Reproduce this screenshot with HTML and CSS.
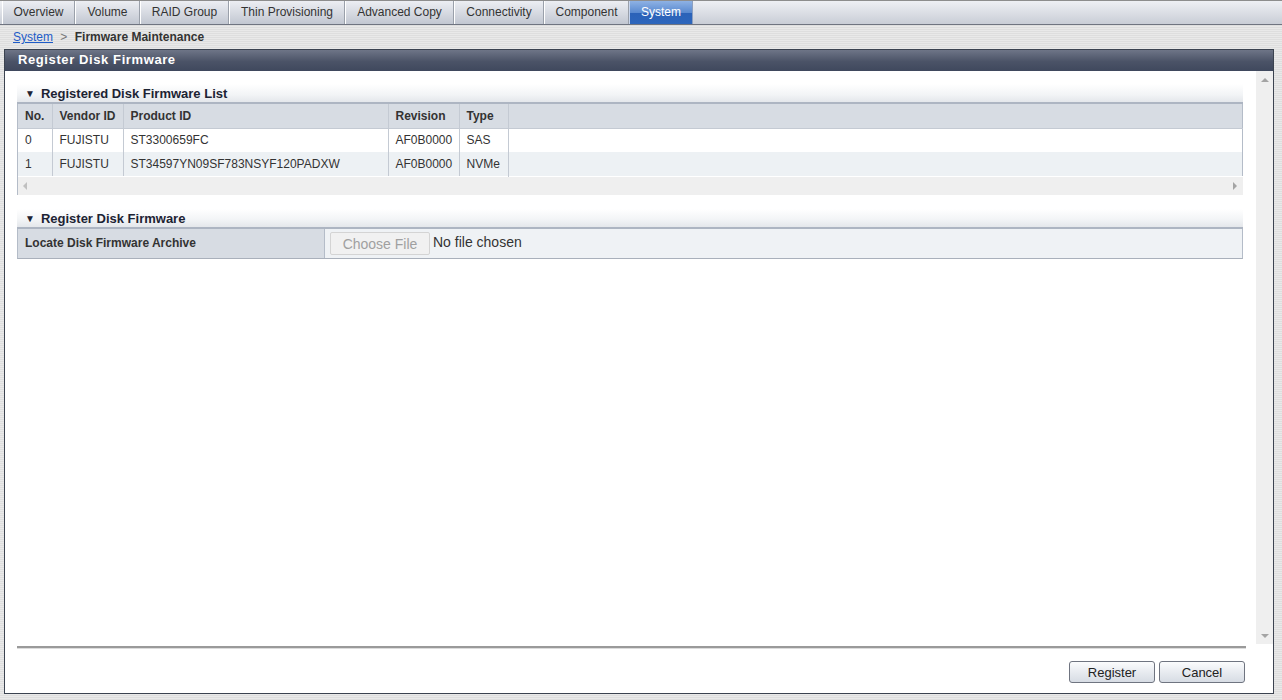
FILE: index.html
```html
<!DOCTYPE html>
<html>
<head>
	<meta charset="utf-8">
	<link rel="stylesheet" href="styles.css">
</head>
<body>
	<div class="tabs">
		<a class="tab" href="#">Overview</a>
		<a class="tab" href="#">Volume</a>
		<a class="tab" href="#">RAID Group</a>
		<a class="tab" href="#">Thin Provisioning</a>
		<a class="tab" href="#">Advanced Copy</a>
		<a class="tab" href="#">Connectivity</a>
		<a class="tab" href="#">Component</a>
		<a class="tab active" href="#">System</a>
	</div>

	<div class="crumbs">
		<a href="#">System</a>
		<span class="crumb-sep">&gt;</span>
		<span class="crumb-here">Firmware Maintenance</span>
	</div>

	<div class="panel">
		<div class="panel-title">Register Disk Firmware</div>

		<div class="panel-scroll">
			<div class="content">
				<div class="section-head"><span class="toggle">&#9660;</span>Registered Disk Firmware List</div>
				<div class="grid">
					<table class="list">
						<tr>
							<th class="c-no">No.</th>
							<th class="c-vendor">Vendor ID</th>
							<th class="c-product">Product ID</th>
							<th class="c-rev">Revision</th>
							<th class="c-type">Type</th>
							<th class="c-fill"></th>
						</tr>
						<tr>
							<td>0</td>
							<td>FUJISTU</td>
							<td>ST3300659FC</td>
							<td>AF0B0000</td>
							<td>SAS</td>
							<td class="c-fill"></td>
						</tr>
						<tr class="alt">
							<td>1</td>
							<td>FUJISTU</td>
							<td>ST34597YN09SF783NSYF120PADXW</td>
							<td>AF0B0000</td>
							<td>NVMe</td>
							<td class="c-fill"></td>
						</tr>
					</table>
					<div class="hscroll">
						<span class="arrow-left"></span>
						<span class="arrow-right"></span>
					</div>
				</div>

				<div class="section-head second"><span class="toggle">&#9660;</span>Register Disk Firmware</div>
				<div class="form-row">
					<div class="form-label">Locate Disk Firmware Archive</div>
					<div class="form-value">
						<button class="file-btn" disabled>Choose File</button>
						<span class="file-name">No file chosen</span>
					</div>
				</div>
			</div>
			<div class="vscroll">
				<span class="arrow-up"></span>
				<span class="arrow-down"></span>
			</div>
		</div>

		<div class="footer">
			<div class="rule"></div>
			<div class="buttons">
				<button class="btn">Register</button>
				<button class="btn">Cancel</button>
			</div>
		</div>
	</div>
</body>
</html>
```

FILE: styles.css
```css
	* {
		box-sizing: border-box;
	}
	html, body {
		height: 100%;
	}
	body {
		margin: 0;
		display: flex;
		flex-direction: column;
		font-family: "Liberation Sans", Arial, sans-serif;
		font-size: 12px;
		color: #222;
		background: repeating-linear-gradient(to bottom, #e9e9e9 0, #e9e9e9 1px, #dedede 1px, #dedede 2px);
	}

/* top tabs */
	.tabs {
		display: flex;
		height: 25px;
		border-top: 1px solid #8d8d8d;
		border-bottom: 1px solid #6f7480;
		background: linear-gradient(#eef0f4, #c9cdd6);
		padding-left: 2px;
	}
	.tab {
		display: block;
		flex: none;
		line-height: 22px;
		text-align: center;
		white-space: nowrap;
		color: #333;
		text-decoration: none;
		border-left: 1px solid #fff;
		border-right: 1px solid #9aa0aa;
		background: linear-gradient(#eceef3, #c2c7d1);
	}
	.tab:nth-child(1) {width: 73px}
	.tab:nth-child(2) {width: 65px}
	.tab:nth-child(3) {width: 89px}
	.tab:nth-child(4) {width: 116px}
	.tab:nth-child(5) {width: 109px}
	.tab:nth-child(6) {width: 90px}
	.tab:nth-child(7) {width: 85px}
	.tab:nth-child(8) {width: 64px}
	.tab.active {
		color: #fff;
		background: linear-gradient(#8eb2e4 0, #5a8ad0 50%, #2b62b8 52%, #2d66bc 100%);
		border-left-color: #c8d6ee;
		border-right-color: #8da0c0;
	}

/* breadcrumbs */
	.crumbs {
		height: 24px;
		line-height: 24px;
		padding-left: 13px;
		white-space: nowrap;
	}
	.crumbs a {
		color: #1e5cc8;
		text-decoration: underline;
	}
	.crumb-sep {
		color: #777;
		margin: 0 4px 0 4px;
	}
	.crumb-here {
		font-weight: bold;
		color: #333;
	}

/* main panel */
	.panel {
		flex: 1;
		display: flex;
		flex-direction: column;
		margin: 0 8px 6px 4px;
		border: 1px solid #3b4350;
		background: #fff;
	}
	.panel-title {
		height: 21px;
		line-height: 20px;
		padding-left: 13px;
		color: #fff;
		font-size: 13px;
		font-weight: bold;
		letter-spacing: 0.6px;
		background: linear-gradient(#6e7587, #4b5367 55%, #3f485d);
	}
	.panel-scroll {
		flex: 1;
		display: flex;
	}
	.content {
		flex: 1;
		padding: 13px 13px 0 12px;
	}
	.vscroll {
		width: 17px;
		background: #efefef;
		display: flex;
		flex-direction: column;
		justify-content: space-between;
		align-items: center;
		padding: 7px 0 6px;
	}
	.arrow-up, .arrow-down, .arrow-left, .arrow-right {
		width: 0;
		height: 0;
		border: 4px solid transparent;
	}
	.arrow-up {border-bottom-color: #a4a4a4; border-top: none}
	.arrow-down {border-top-color: #a4a4a4; border-bottom: none}
	.arrow-left {border-right-color: #c0c0c0; border-left: none}
	.arrow-right {border-left-color: #a4a4a4; border-right: none}

/* section heading */
	.section-head {
		height: 20px;
		line-height: 19px;
		padding-left: 8px;
		font-size: 13px;
		font-weight: bold;
		color: #1c2333;
		background: linear-gradient(#fff, #f2f4f6 60%, #e4e7eb);
		border-bottom: 2px solid #adb5c2;
	}
	.section-head.second {
		margin-top: 14px;
	}
	.toggle {
		font-size: 10px;
		margin-right: 6px;
		vertical-align: 1px;
	}

/* firmware list */
	.grid {
		border-left: 1px solid #b4bcc8;
	}
	.list {
		width: 100%;
		table-layout: fixed;
		border-collapse: collapse;
	}
	.list th, .list td {
		height: 24px;
		padding: 0 7px;
		text-align: left;
		white-space: nowrap;
		border-right: 1px solid #c4cad3;
	}
	.list th {
		background: #d7dce3;
		font-weight: bold;
		color: #333;
	}
	.list td {
		color: #333;
		background: #fff;
	}
	.list tr:first-child th {
		border-bottom: 1px solid #c4cad3;
	}
	.list tr.alt td {
		background: #edf1f4;
	}
	.list .c-fill {
		border-right: 1px solid #b4bcc8;
	}
	.list tr.alt td.c-fill {
		border-bottom: 1px solid #fff;
	}
	.c-no {width: 34px}
	.c-vendor {width: 71px}
	.c-product {width: 265px}
	.c-rev {width: 71px}
	.c-type {width: 49px}
	.hscroll {
		height: 18px;
		background: #efefef;
		display: flex;
		justify-content: space-between;
		align-items: center;
		padding: 0 6px 0 5px;
	}

/* register form */
	.form-row {
		display: flex;
		height: 30px;
		border-left: 1px solid #b4bcc8;
		border-right: 1px solid #b4bcc8;
		border-bottom: 1px solid #a9b0bb;
	}
	.form-label {
		width: 307px;
		padding-left: 7px;
		line-height: 29px;
		font-weight: bold;
		color: #333;
		background: #d7dce3;
		border-right: 1px solid #b4bcc8;
	}
	.form-value {
		flex: 1;
		display: flex;
		align-items: center;
		padding-left: 5px;
		background: #eff2f5;
	}
	.file-btn {
		width: 100px;
		height: 23px;
		margin-top: 1px;
		font-family: "Liberation Sans", Arial, sans-serif;
		font-size: 14px;
		color: #a0a0a0;
		background: #f1f1f1;
		border: 1px solid #d4d4d4;
		border-radius: 2px;
		padding: 0;
	}
	.file-name {
		font-size: 14px;
		color: #333;
		margin-left: 3px;
		margin-top: -2px;
	}

/* footer */
	.footer {
		padding: 2px 27px 10px 12px;
	}
	.rule {
		height: 3px;
		border-top: 2px solid #9a9a9a;
		background: #dcdcdc;
	}
	.buttons {
		display: flex;
		justify-content: flex-end;
		gap: 4px;
		margin-top: 12px;
		padding-right: 1px;
	}
	.btn {
		width: 86px;
		height: 22px;
		padding: 0;
		font-family: "Liberation Sans", Arial, sans-serif;
		font-size: 13px;
		color: #222;
		border: 1px solid #6f7480;
		border-radius: 3px;
		background: linear-gradient(#fbfcfd, #e8ebf0 50%, #d7dce4);
	}
```
